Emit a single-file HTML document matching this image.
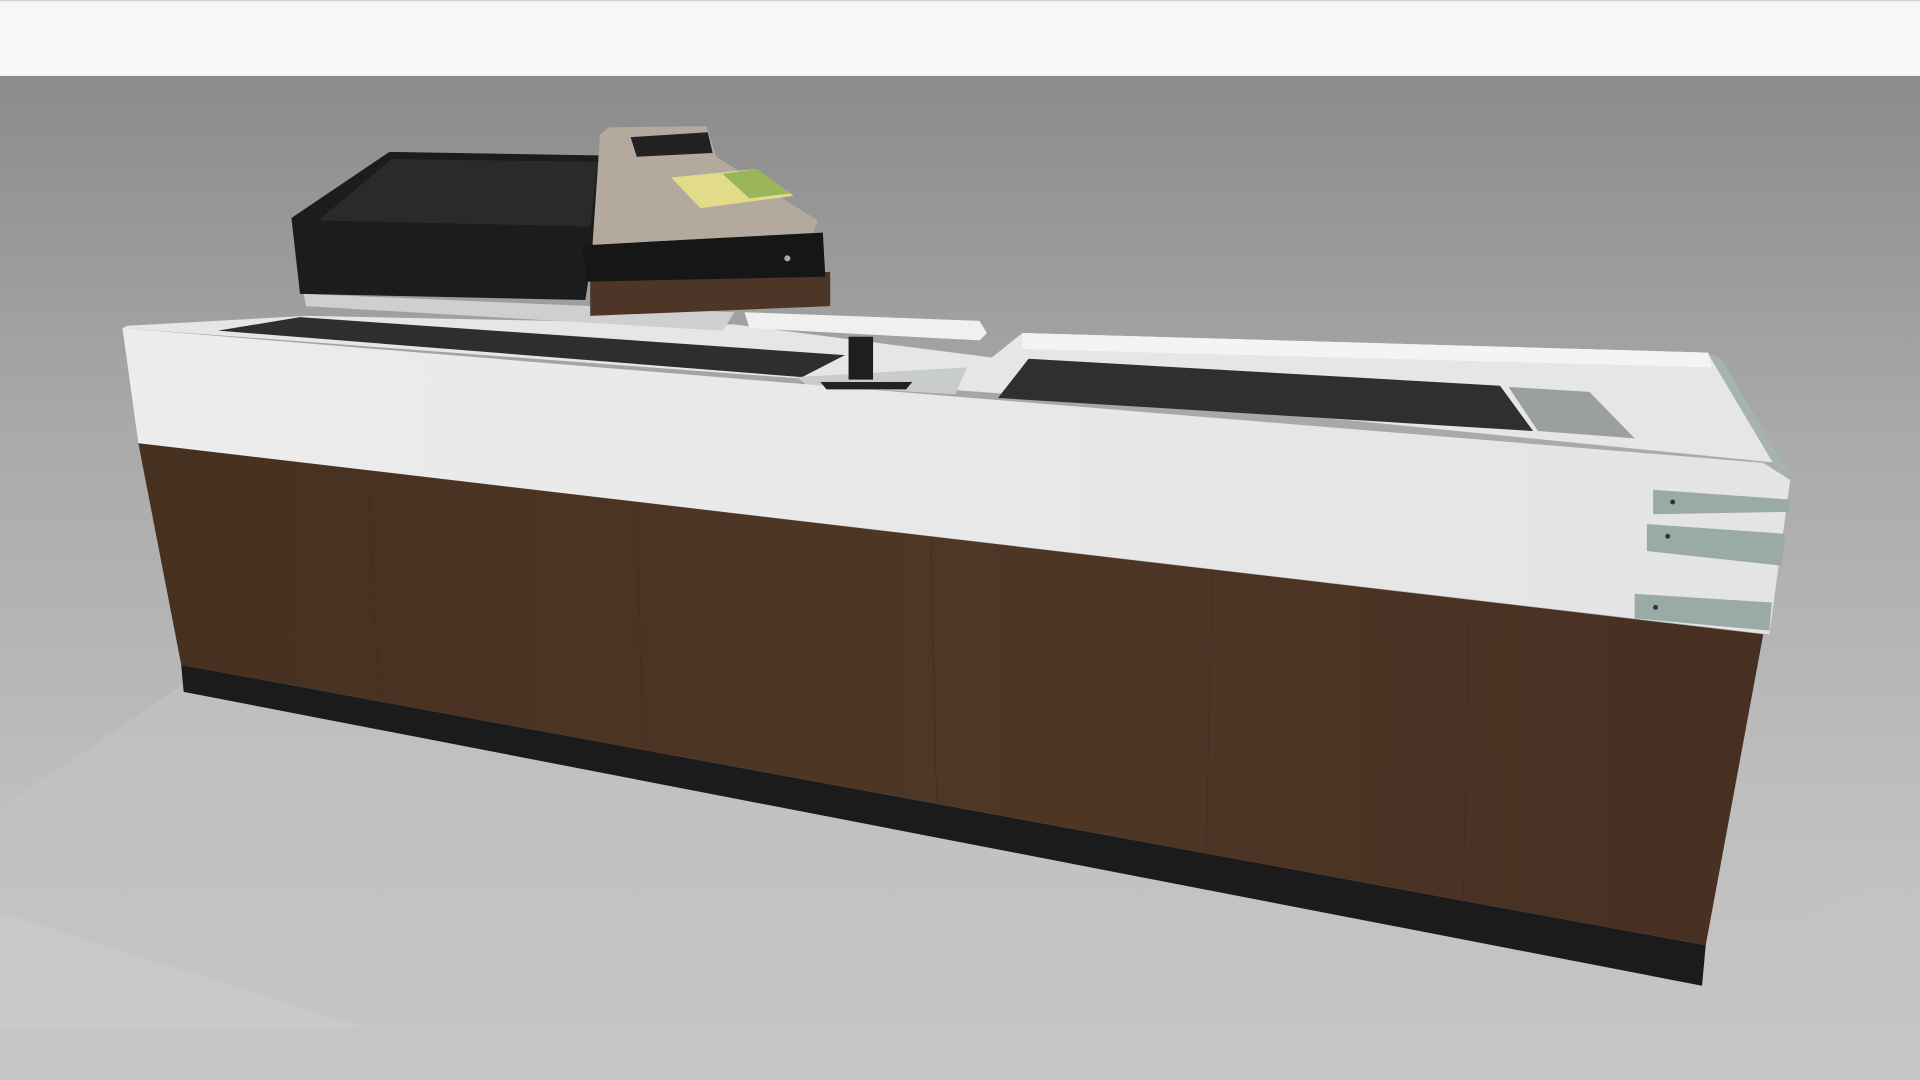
<!DOCTYPE html>
<html><head><meta charset="utf-8"><style>
html,body{margin:0;padding:0;width:1920px;height:1080px;overflow:hidden;background:#f7f7f7}
svg{display:block}
</style></head><body>
<svg width="1920" height="1080" viewBox="0 0 1568 882" preserveAspectRatio="none" xmlns="http://www.w3.org/2000/svg">
<defs>
<linearGradient id="bg" x1="0" y1="0" x2="0" y2="1">
<stop offset="0" stop-color="#8b8b8b"/><stop offset="0.35" stop-color="#a9a9a9"/><stop offset="0.7" stop-color="#bdbdbd"/><stop offset="1" stop-color="#c9c9c9"/>
</linearGradient>
<linearGradient id="wood" x1="0" y1="0" x2="1" y2="0">
<stop offset="0" stop-color="#46301f"/><stop offset="0.5" stop-color="#4f3726"/><stop offset="1" stop-color="#473022"/>
</linearGradient>
<linearGradient id="white" x1="0" y1="0" x2="1" y2="0">
<stop offset="0" stop-color="#ececec"/><stop offset="1" stop-color="#e4e4e4"/>
</linearGradient>
</defs>
<rect x="0" y="0" width="1568" height="62" fill="#f7f7f7"/>
<rect x="0" y="0" width="1568" height="1" fill="#cfcfcf"/>
<rect x="0" y="62" width="1568" height="820" fill="url(#bg)"/>
<polygon points="0,660 148,560 1390,800 1568,700 1568,882 0,882" fill="#c3c3c3" opacity="0.6"/>
<polygon points="0,745 300,840 0,840" fill="#cdcdcd" opacity="0.5"/>
<!-- top surface -->
<polygon points="104,266 250,258 600,265 810,292 835,272 1395,288 1452,378 1100,343 800,320 100,268" fill="#e6e6e6"/>
<polygon points="835,272 1395,288 1398,300 835,285" fill="#f4f4f4"/>
<polygon points="1395,289 1405,292 1462,388 1455,390" fill="#a5b4b0"/>
<!-- belts -->
<polygon points="178,270 245,259 690,290 655,308" fill="#2e2e2e"/>
<polygon points="815,325 840,293 1225,315 1252,352" fill="#2f2f2f"/>
<polygon points="1232,316 1298,320 1335,358 1256,352" fill="#9aa09e"/>
<polygon points="650,308 790,300 780,322 660,315" fill="#c8cccb"/>
<!-- white front band -->
<polygon points="100,268 1440,378 1462,392 1445,518 113,362" fill="url(#white)"/>
<!-- wood -->
<polygon points="113,362 1440,518 1393,772 148,543" fill="url(#wood)"/>
<g stroke="#3e2b20" stroke-width="1" opacity="0.5">
<line x1="300" y1="385" x2="310" y2="575"/><line x1="520" y1="410" x2="525" y2="615"/><line x1="760" y1="440" x2="765" y2="660"/><line x1="990" y1="465" x2="985" y2="700"/><line x1="1200" y1="490" x2="1195" y2="735"/>
</g>
<!-- plinth -->
<polygon points="148,543 1393,772 1390,805 150,565" fill="#1b1b1b"/>
<!-- brackets -->
<polygon points="1350,400 1462,408 1460,418 1350,420" fill="#9aaba6"/>
<polygon points="1345,428 1458,436 1455,462 1345,450" fill="#9aaba6"/>
<polygon points="1335,485 1447,492 1445,515 1335,505" fill="#9aaba6"/>
<circle cx="1366" cy="410" r="2" fill="#333"/><circle cx="1362" cy="438" r="2" fill="#333"/><circle cx="1352" cy="496" r="2" fill="#333"/>
<!-- black cabinet -->
<polygon points="238,178 318,124 492,127 485,200 478,245 245,240" fill="#1c1c1c"/>
<polygon points="260,180 320,130 488,132 482,185" fill="#2a2a2a"/>
<polygon points="248,240 600,255 590,270 250,250" fill="#cfcfcf"/>
<!-- register -->
<polygon points="482,228 678,222 678,250 482,258" fill="#4d3527"/>
<polygon points="475,200 672,190 674,226 480,230" fill="#161616"/>
<circle cx="643" cy="211" r="2.5" fill="#aaa"/>
<polygon points="484,198 490,110 497,104 577,103 585,128 668,180 664,190 484,200" fill="#b3a99c"/>
<polygon points="515,112 578,108 582,125 520,128" fill="#222"/>
<polygon points="548,145 618,138 648,160 572,170" fill="#e2dc8a"/>
<polygon points="590,142 618,138 645,158 612,162" fill="#9ab55a"/>
<!-- shelf & post -->
<polygon points="608,255 800,262 806,272 800,278 612,268" fill="#f0f0f0"/>
<rect x="693" y="275" width="20" height="35" fill="#1e1e1e"/>
<polygon points="670,312 745,312 740,318 675,318" fill="#222"/>
</svg>
</body></html>
